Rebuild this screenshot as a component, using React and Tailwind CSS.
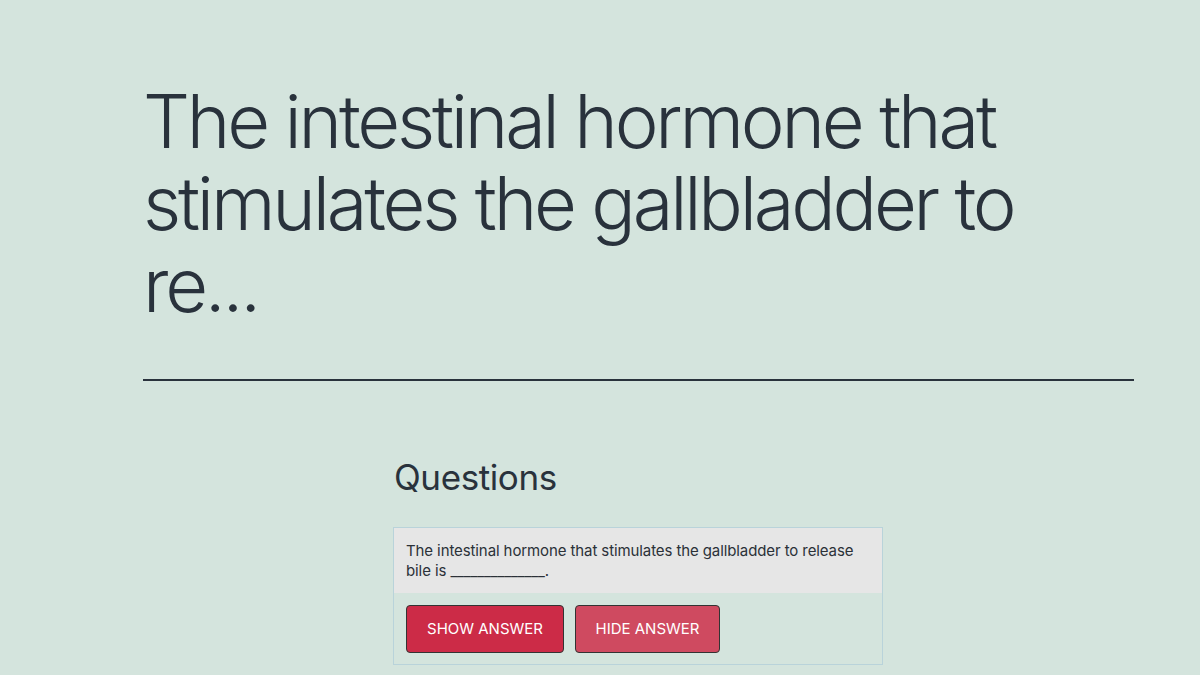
export default function App() {
  return (
    <div className="min-h-[675px] w-full bg-[#d4e4dd] font-['Inter','Liberation_Sans',sans-serif] text-[#29323c] overflow-hidden">
      <div className="pl-[143px] pr-[66px] pt-[80px]">
        <h1 className="text-[74px] font-light leading-[82px] tracking-[-3.2px] w-[960px]">
          The intestinal hormone that stimulates the gallbladder to re...
        </h1>
        <hr className="mt-[53px] border-0 h-[2px] bg-[#29323c]" />
      </div>
      <div className="ml-[393px] w-[490px] mt-[76px]">
        <h2 className="text-[35px] font-normal leading-[40px] pl-[1px] tracking-[-0.4px]">Questions</h2>
        <div className="mt-[30px] border border-[#b9d3da]">
          <div className="bg-[#e6e6e6] px-[12px] pt-[13px] pb-[12px] text-[15px] leading-[20px] tracking-[-0.1px] text-[#2b3138]">
            The intestinal hormone that stimulates the gallbladder to release bile is ______________.
          </div>
          <div className="flex gap-[11px] px-[12px] pt-[12px] pb-[11px]">
            <button className="w-[158px] h-[48px] rounded-[4px] border border-[#333] bg-[#cc2b47] text-white text-[15px] uppercase">
              Show Answer
            </button>
            <button className="w-[145px] h-[48px] rounded-[4px] border border-[#333] bg-[#cf4a60] text-white text-[15px] uppercase">
              Hide Answer
            </button>
          </div>
        </div>
      </div>
    </div>
  )
}
